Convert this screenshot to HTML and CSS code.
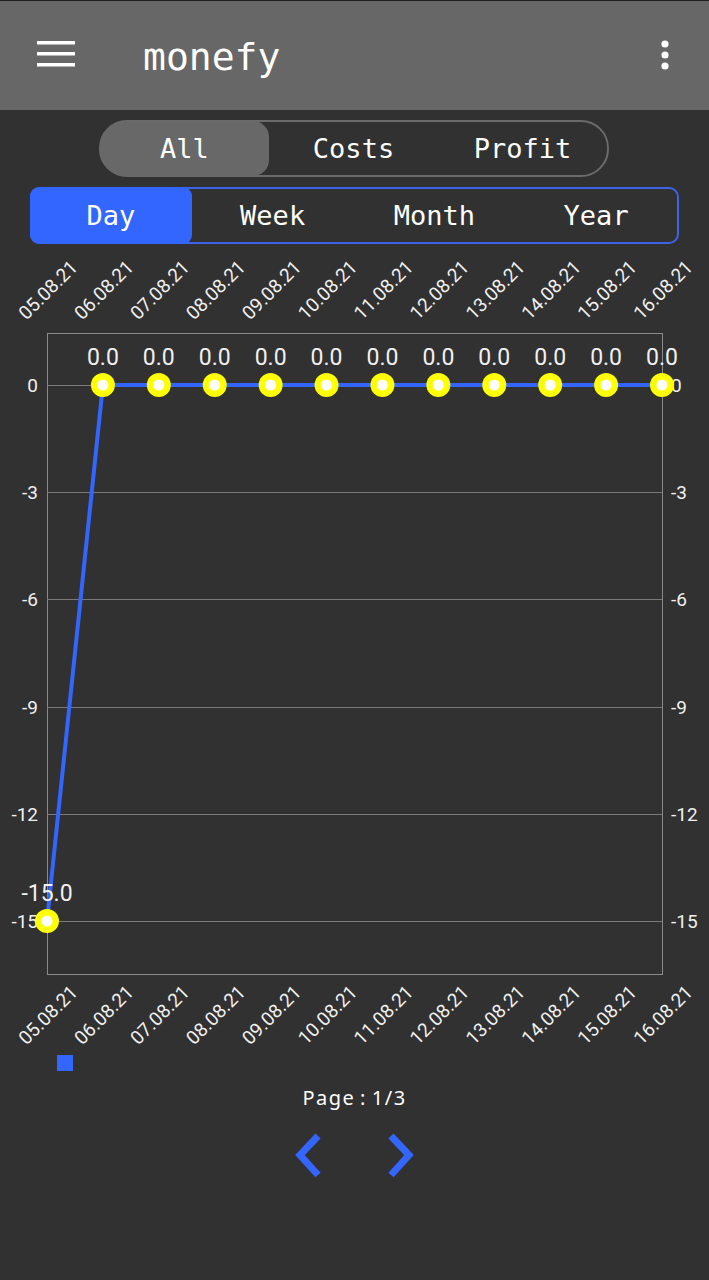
FILE: index.html
```html
<!DOCTYPE html>
<html lang="en">
<head>
  <meta charset="UTF-8">
  <title>monefy</title>
  <link rel="stylesheet" href="styles.css">
</head>
<body>

  <div class="app-bar">
    <svg class="menu-icon" width="38" height="26" viewBox="0 0 38 26">
      <rect x="0" y="0" width="38" height="3.5" fill="#fff"/>
      <rect x="0" y="11" width="38" height="3.5" fill="#fff"/>
      <rect x="0" y="22" width="38" height="3.5" fill="#fff"/>
    </svg>
    <h1 class="title">monefy</h1>
    <svg class="more-icon" width="10" height="30" viewBox="0 0 10 30">
      <circle cx="5" cy="4" r="3.6" fill="#fff"/>
      <circle cx="5" cy="15" r="3.6" fill="#fff"/>
      <circle cx="5" cy="26" r="3.6" fill="#fff"/>
    </svg>
  </div>

  <div class="type-switch">
    <div class="type-item active">All</div>
    <div class="type-item">Costs</div>
    <div class="type-item">Profit</div>
  </div>

  <div class="period-switch">
    <div class="period-item active">Day</div>
    <div class="period-item">Week</div>
    <div class="period-item">Month</div>
    <div class="period-item">Year</div>
  </div>

  <svg id="chart" class="chart" width="709" height="830" viewBox="0 0 709 830"></svg>

  <div class="pager">
    <p class="page-label">Page&thinsp;:&thinsp;1/3</p>
    <div class="pager-buttons">
      <svg width="34" height="50" viewBox="0 0 34 50">
        <polyline points="26,4 8,23 26,43" fill="none" stroke="#3366ff" stroke-width="7"/>
      </svg>
      <svg width="34" height="50" viewBox="0 0 34 50">
        <polyline points="8,4 26,23 8,43" fill="none" stroke="#3366ff" stroke-width="7"/>
      </svg>
    </div>
  </div>

  <script>
    let dates = ["05.08.21", "06.08.21", "07.08.21", "08.08.21", "09.08.21", "10.08.21",
                 "11.08.21", "12.08.21", "13.08.21", "14.08.21", "15.08.21", "16.08.21"];
    let values = [-15, 0, 0, 0, 0, 0, 0, 0, 0, 0, 0, 0];

    let plotLeft = 47, plotRight = 662, plotTop = 83, plotBottom = 724;
    let zeroY = 135, unit = 107.2 / 3;
    let step = (plotRight - plotLeft) / (dates.length - 1);

    function px(i) { return plotLeft + i * step; }
    function py(v) { return zeroY - v * unit; }

    let svg = "";

    // frame and grid
    svg += `<rect x="${plotLeft + 0.5}" y="${plotTop + 0.5}" width="${plotRight - plotLeft}" height="${plotBottom - plotTop}" class="frame"/>`;
    for (let v = 0; v >= -15; v -= 3) {
      let y = Math.round(py(v)) + 0.5;
      svg += `<line x1="${plotLeft}" x2="${plotRight}" y1="${y}" y2="${y}" class="grid"/>`;
      svg += `<text x="38" y="${y}" class="axis" text-anchor="end">${v}</text>`;
      svg += `<text x="671" y="${y}" class="axis">${v}</text>`;
    }

    // date labels, top and bottom
    dates.forEach(function (d, i) {
      let x = px(i) + 1;
      svg += `<text x="${x}" y="40" class="date" transform="rotate(-45 ${x} 40)">${d}</text>`;
      svg += `<text x="${x}" y="765" class="date" transform="rotate(-45 ${x} 765)">${d}</text>`;
    });

    // line
    let pts = values.map(function (v, i) { return px(i) + "," + py(v); }).join(" ");
    svg += `<polyline points="${pts}" class="line"/>`;

    // dots and values
    values.forEach(function (v, i) {
      let x = px(i), y = py(v);
      svg += `<circle cx="${x}" cy="${y}" r="12" fill="#ffff00"/>`;
      svg += `<circle cx="${x}" cy="${y}" r="5.5" fill="#fff"/>`;
      svg += `<text x="${x}" y="${y - 28}" class="value">${v.toFixed(1)}</text>`;
    });

    svg += `<rect x="57" y="805" width="16" height="16" fill="#3366ff"/>`;

    document.getElementById("chart").innerHTML = svg;
  </script>

</body>
</html>
```

FILE: styles.css
```css
body {
  margin: 0;
  background: #313131;
  font-family: "DejaVu Sans Mono", monospace;
  color: white;
}

.app-bar {
  height: 109px;
  border-top: 1px solid #1e1e1e;
  background: #676767;
  display: flex;
  align-items: center;
}

.menu-icon {
  margin-left: 37px;
  margin-top: -4px;
}

.title {
  margin: 0 0 0 68px;
  font-size: 38px;
  font-weight: normal;
  flex: 1;
  margin-top: 2px;
}

.more-icon {
  margin-right: 39px;
  margin-top: -2px;
}

.type-switch {
  display: flex;
  width: 506px;
  height: 53px;
  margin: 10px 0 0 99px;
  border: 2px solid #6a6a6a;
  border-radius: 28px;
}

.type-item {
  flex: 1;
  display: flex;
  align-items: center;
  justify-content: center;
  font-size: 27px;
}

.type-item.active {
  background: #686868;
  border-radius: 27px 16px 16px 27px;
  margin: -1px 0 -1px -1px;
}

.period-switch {
  display: flex;
  width: 645px;
  height: 53px;
  margin: 10px 0 0 30px;
  border: 2px solid #3d63e8;
  border-radius: 10px;
}

.period-item {
  flex: 1;
  display: flex;
  align-items: center;
  justify-content: center;
  font-size: 27px;
}

.period-item.active {
  background: #3366ff;
  border-radius: 9px;
  margin: -2px 0 -2px -2px;
}

/* Chart */
.chart {
  display: block;
  margin-top: 6px;
  font-family: Roboto, sans-serif;
}

.chart .frame {
  fill: none;
  stroke: #8a8a8a;
  stroke-width: 1;
}

.chart .grid {
  stroke: #7a7a7a;
  stroke-width: 1;
}

.chart .axis {
  fill: #f0f0f0;
  font-size: 19px;
  dominant-baseline: central;
}

.chart .date {
  fill: #f0f0f0;
  font-size: 19px;
  text-anchor: middle;
  dominant-baseline: central;
}

.chart .line {
  fill: none;
  stroke: #3366ff;
  stroke-width: 4;
}

.chart .value {
  fill: #f0f0f0;
  font-size: 23px;
  text-anchor: middle;
  dominant-baseline: central;
}

/* Pager */
.pager {
  text-align: center;
}

.page-label {
  margin: 4px 0 0 0;
  font-family: "Noto Sans", sans-serif;
  font-size: 20px;
  letter-spacing: 1.5px;
}

.pager-buttons {
  display: flex;
  justify-content: center;
  gap: 57px;
  margin-top: 21px;
}
```
